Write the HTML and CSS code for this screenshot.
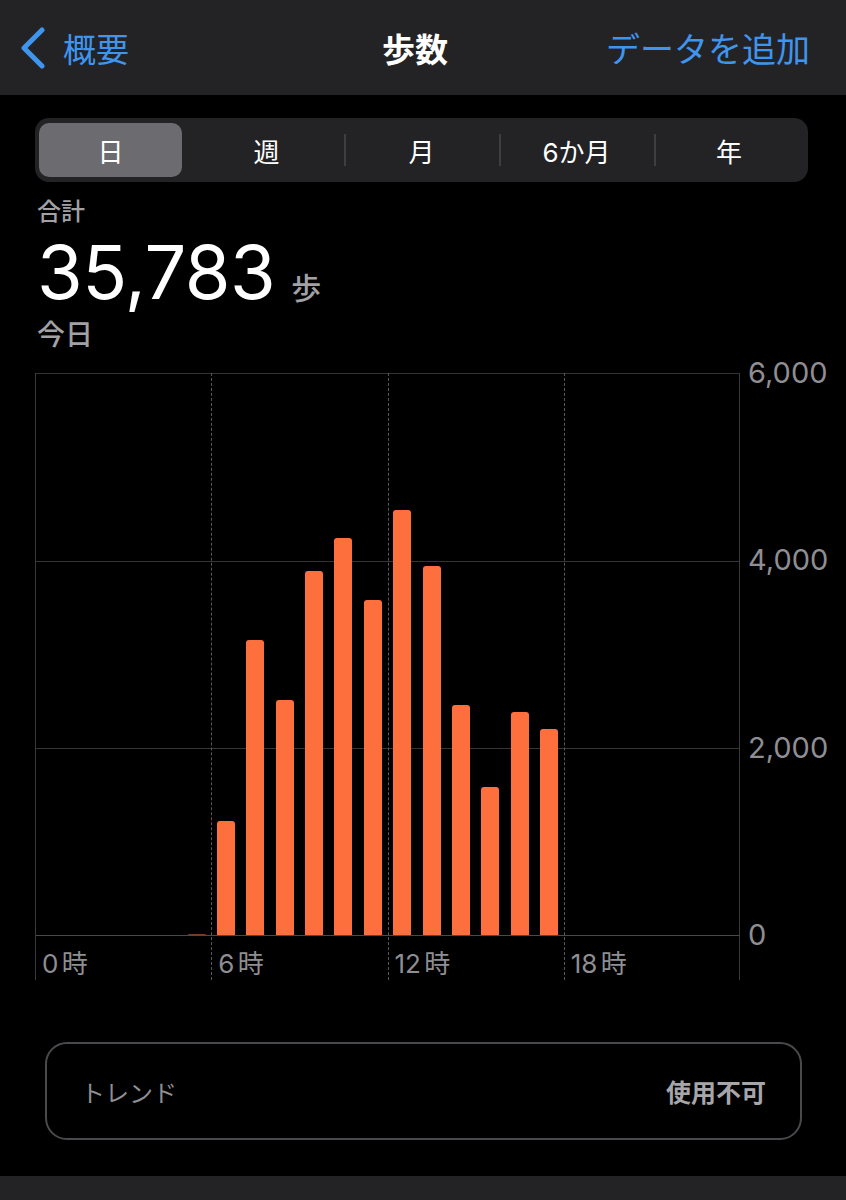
FILE: index.html
```html
<!DOCTYPE html>
<html lang="ja">
<head>
  <meta charset="UTF-8">
  <meta name="viewport" content="width=device-width, initial-scale=1.0">
  <title>歩数</title>
  <link rel="stylesheet" href="styles.css">
</head>
<body>

  <!-- Navigation bar -->
  <header class="nav">
    <a class="nav-back" href="#">
      <svg class="chevron" width="26" height="42" viewBox="0 0 26 42">
        <path d="M22 3 L4 21 L22 39" fill="none" stroke="currentColor" stroke-width="5" stroke-linecap="round" stroke-linejoin="round"/>
      </svg>
      <span>概要</span>
    </a>
    <h1 class="nav-title">歩数</h1>
    <a class="nav-action" href="#">データを追加</a>
  </header>

  <main class="content">
    <!-- Period switcher -->
    <div class="segments">
      <div class="segment selected"><span>日</span></div>
      <div class="segment"><span>週</span></div>
      <div class="segment sep"><span>月</span></div>
      <div class="segment sep"><span>6か月</span></div>
      <div class="segment sep"><span>年</span></div>
    </div>

    <!-- Total -->
    <div class="summary">
      <div class="summary-label">合計</div>
      <div class="summary-value"><span class="num">35,783</span><span class="unit">歩</span></div>
      <div class="summary-date">今日</div>
    </div>

    <!-- Hourly chart -->
    <div class="chart">
      <div class="plot">
        <div class="bars-area">
          <div class="hline h0"></div>
          <div class="hline h1"></div>
          <div class="hline h2"></div>
          <div class="hline h3 base"></div>
          <div class="bars">
            <div class="col"></div><div class="col"></div><div class="col"></div>
            <div class="col"></div><div class="col"></div>
            <div class="col"><div class="bar tiny"></div></div>
            <div class="col"><div class="bar" style="height:20.2%"></div></div>
            <div class="col"><div class="bar" style="height:52.5%"></div></div>
            <div class="col"><div class="bar" style="height:41.8%"></div></div>
            <div class="col"><div class="bar" style="height:64.8%"></div></div>
            <div class="col"><div class="bar" style="height:70.6%"></div></div>
            <div class="col"><div class="bar" style="height:59.6%"></div></div>
            <div class="col"><div class="bar" style="height:75.7%"></div></div>
            <div class="col"><div class="bar" style="height:65.7%"></div></div>
            <div class="col"><div class="bar" style="height:40.9%"></div></div>
            <div class="col"><div class="bar" style="height:26.4%"></div></div>
            <div class="col"><div class="bar" style="height:39.6%"></div></div>
            <div class="col"><div class="bar" style="height:36.7%"></div></div>
            <div class="col"></div><div class="col"></div><div class="col"></div>
            <div class="col"></div><div class="col"></div><div class="col"></div>
          </div>
        </div>
        <div class="xlabels">
          <span>0 時</span>
          <span>6 時</span>
          <span>12 時</span>
          <span>18 時</span>
        </div>
        <!-- vertical guide lines -->
        <div class="vline solid left"></div>
        <div class="vline solid right"></div>
        <div class="vline dashed q1"></div>
        <div class="vline dashed q2"></div>
        <div class="vline dashed q3"></div>
      </div>
      <div class="yaxis">
        <span>6,000</span>
        <span>4,000</span>
        <span>2,000</span>
        <span>0</span>
      </div>
    </div>

    <!-- Trend card -->
    <div class="trend-card">
      <span class="trend-label">トレンド</span>
      <span class="trend-value">使用不可</span>
    </div>
  </main>

  <footer class="tabbar"></footer>

</body>
</html>
```

FILE: styles.css
```css
/* General */
body {
  margin: 0;
  width: 846px;
  height: 1200px;
  overflow: hidden;
  background: #000;
  color: #fff;
  font-family: Inter, "Noto Sans CJK JP", sans-serif;
  display: flex;
  flex-direction: column;
}

a {
  text-decoration: none;
}

/* Navigation bar */
.nav {
  height: 95px;
  background: #232325;
  display: grid;
  grid-template-columns: 1fr auto 1fr;
  align-items: center;
  padding: 0 36px 0 20px;
}

.nav-back {
  display: flex;
  align-items: center;
  gap: 17px;
  color: #3f95ee;
  font-size: 33px;
}

.chevron {
  display: block;
}

.nav-title {
  margin: 0;
  font-size: 33px;
  font-weight: 700;
}

.nav-action {
  justify-self: end;
  color: #3f95ee;
  font-size: 34px;
}

.content {
  flex: 1;
}

/* Segmented control */
.segments {
  margin: 23px 38px 0 35px;
  height: 64px;
  box-sizing: border-box;
  padding: 5px 4px;
  background: #232326;
  border-radius: 14px;
  display: grid;
  grid-template-columns: 150px 155px 155px 155px 150px;
}

.segment {
  display: flex;
  align-items: center;
  justify-content: center;
  font-size: 26px;
  color: #fff;
  position: relative;
}

.segment.sep::before {
  content: "";
  position: absolute;
  left: 0;
  top: 11px;
  bottom: 11px;
  width: 2px;
  background: #3e3e42;
}

.segment.selected {
  background: #6b6b70;
  border-radius: 10px;
  margin-right: 7px;
}

/* Total */
.summary {
  margin: 15px 0 0 37px;
  display: flex;
  flex-direction: column;
  gap: 7px;
}

.summary-label {
  font-size: 24px;
  line-height: 30px;
  font-weight: 500;
  color: #a1a1a6;
}

.summary-value {
  display: flex;
  align-items: baseline;
  gap: 16px;
  line-height: 76px;
  height: 76px;
}

.num {
  font-size: 74px;
  font-weight: 400;
  letter-spacing: -0.5px;
}

.unit {
  font-size: 30px;
  font-weight: 500;
  color: #a1a1a6;
}

.summary-date {
  font-size: 28px;
  line-height: 36px;
  font-weight: 500;
  color: #a1a1a6;
}

/* Chart */
.chart {
  display: flex;
  margin: 20px 0 0 35px;
}

.plot {
  width: 705px;
  height: 607px;
  position: relative;
}

.bars-area {
  height: 562px;
  position: relative;
}

.hline {
  position: absolute;
  left: 0;
  right: 0;
  height: 1px;
  background: #343436;
}

.h0 { top: 0; }
.h1 { top: 188px; }
.h2 { top: 375px; }
.h3 { top: 562px; }
.hline.base { background: #4a4a4c; }

.vline {
  position: absolute;
  top: 0;
  bottom: 0;
  width: 0;
}

.vline.solid { border-left: 1px solid #3a3a3c; }
.vline.dashed { border-left: 1px dashed #59595c; }
.left { left: 0; }
.right { right: 0; }
.q1 { left: 25%; }
.q2 { left: 50%; }
.q3 { left: 75%; }

.bars {
  position: absolute;
  inset: 0;
  display: grid;
  grid-template-columns: repeat(24, 1fr);
  align-items: end;
  z-index: 1;
}

.col {
  height: 100%;
  display: flex;
  align-items: flex-end;
  justify-content: center;
}

.bar {
  width: 18px;
  background: #fd703e;
  border-radius: 3px 3px 0 0;
}

.bar.tiny {
  height: 1px;
  background: #7a3a24;
}

.xlabels {
  display: grid;
  grid-template-columns: repeat(4, 1fr);
  padding-top: 12px;
}

.xlabels span {
  font-size: 26px;
  line-height: 34px;
  color: #8e8e93;
  padding-left: 7px;
  word-spacing: -4px;
}

.yaxis {
  margin: -17px 0 0 8px;
  height: 596px;
  display: flex;
  flex-direction: column;
  justify-content: space-between;
}

.yaxis span {
  font-size: 29px;
  line-height: 34px;
  color: #8e8e93;
}

/* Trend card */
.trend-card {
  margin: 62px 44px 0 45px;
  height: 98px;
  box-sizing: border-box;
  border: 2px solid #4a4a4e;
  border-radius: 22px;
  display: flex;
  align-items: center;
  justify-content: space-between;
  padding: 0 34px 0 34px;
}

.trend-label {
  font-size: 24px;
  color: #8e8e93;
}

.trend-value {
  font-size: 25px;
  font-weight: 700;
  color: #a6a6aa;
}

/* Bottom bar */
.tabbar {
  height: 24px;
  background: #232325;
}
```
